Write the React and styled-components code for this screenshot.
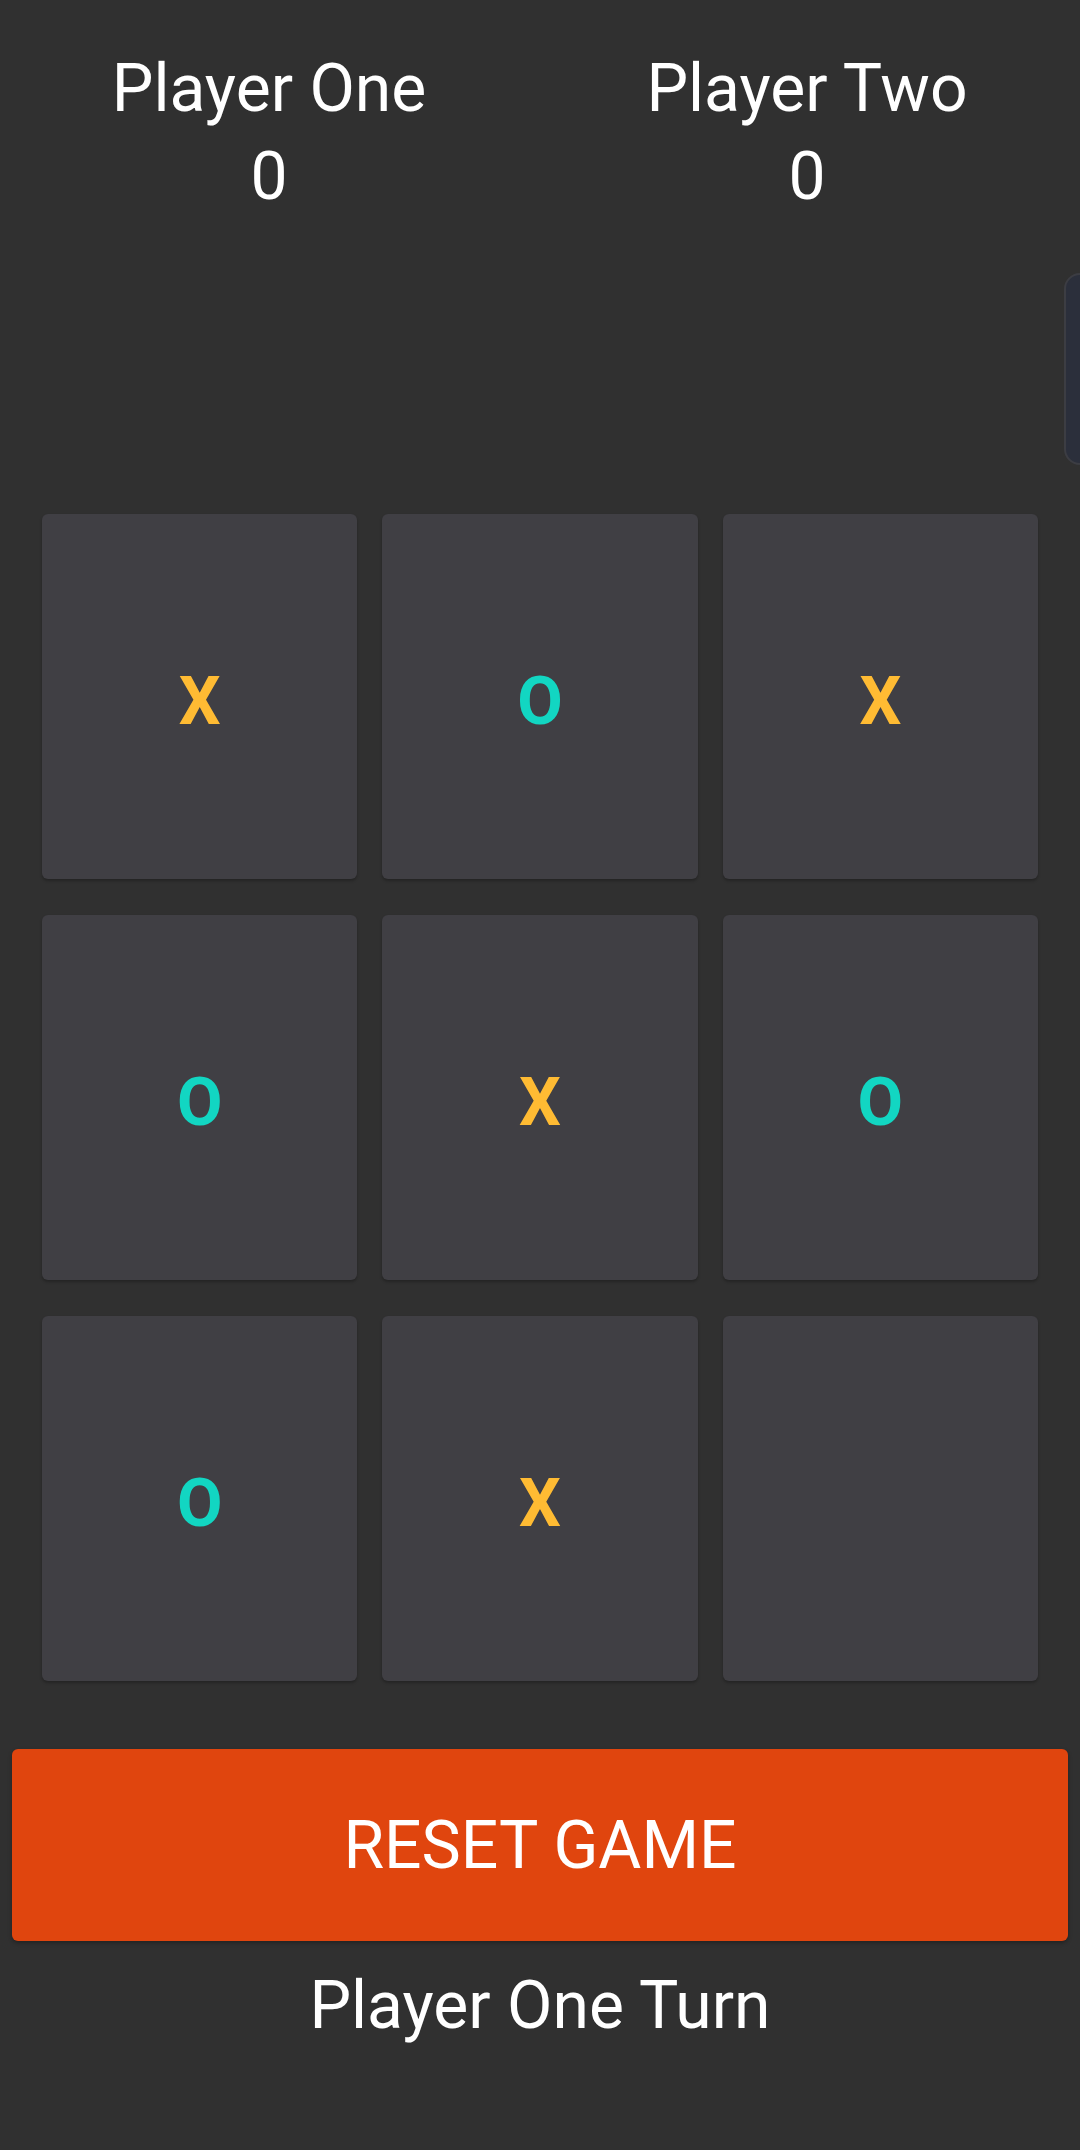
import React from 'react';
import styled, { createGlobalStyle } from 'styled-components';

const GlobalStyle = createGlobalStyle`
  html, body {
    margin: 0;
    padding: 0;
    background: #303030;
  }
  * {
    box-sizing: border-box;
  }
`;

const Screen = styled.div`
  position: relative;
  display: flex;
  flex-direction: column;
  min-height: 2150px;
  background: #303030;
  font-family: Roboto, "Noto Sans", sans-serif;
  color: #ffffff;
  overflow: hidden;
`;

const ScoreBoard = styled.div`
  display: grid;
  grid-template-columns: 1fr 1fr;
  padding: 45px 4px 0 0;
`;

const PlayerScore = styled.div`
  text-align: center;
  font-size: 66px;
  line-height: 88px;
  font-weight: 400;
`;

const Board = styled.div`
  display: grid;
  grid-template-columns: repeat(3, 1fr);
  grid-auto-rows: 365px;
  column-gap: 25px;
  row-gap: 36px;
  padding: 0 42px;
  margin-top: 293px;
`;

const Cell = styled.div`
  display: flex;
  align-items: center;
  justify-content: center;
  padding-top: 9px;
  background: #403f44;
  border-radius: 6px;
  box-shadow: 0 2px 3px rgba(0, 0, 0, 0.25);
  font-size: 66px;
  font-weight: 700;
  color: ${({ mark }) => (mark === 'X' ? '#ffbb33' : '#12d6c2')};
`;

const ResetButton = styled.button`
  display: flex;
  align-items: center;
  justify-content: center;
  height: 192px;
  margin: 68px 12px 0;
  border: none;
  border-radius: 6px;
  background: #e0450e;
  box-shadow: 0 2px 4px rgba(0, 0, 0, 0.3);
  color: #ffffff;
  font-family: inherit;
  font-size: 66px;
  font-weight: 400;
  text-transform: uppercase;
  cursor: pointer;
`;

const TurnLabel = styled.div`
  margin-top: 26px;
  text-align: center;
  font-size: 66px;
  line-height: 77px;
`;

const EdgeHandle = styled.div`
  position: absolute;
  top: 273px;
  right: -20px;
  width: 36px;
  height: 192px;
  background: #2b2f3b;
  border: 2px solid #3c3d43;
  border-radius: 16px;
`;

const board = ['X', 'O', 'X', 'O', 'X', 'O', 'O', 'X', ''];

export default function App() {
  return (
    <Screen>
      <GlobalStyle />
      <ScoreBoard>
        <PlayerScore>
          Player One
          <br />0
        </PlayerScore>
        <PlayerScore>
          Player Two
          <br />0
        </PlayerScore>
      </ScoreBoard>
      <EdgeHandle />
      <Board>
        {board.map((mark, i) => (
          <Cell key={i} mark={mark}>
            {mark}
          </Cell>
        ))}
      </Board>
      <ResetButton>Reset Game</ResetButton>
      <TurnLabel>Player One Turn</TurnLabel>
    </Screen>
  );
}
